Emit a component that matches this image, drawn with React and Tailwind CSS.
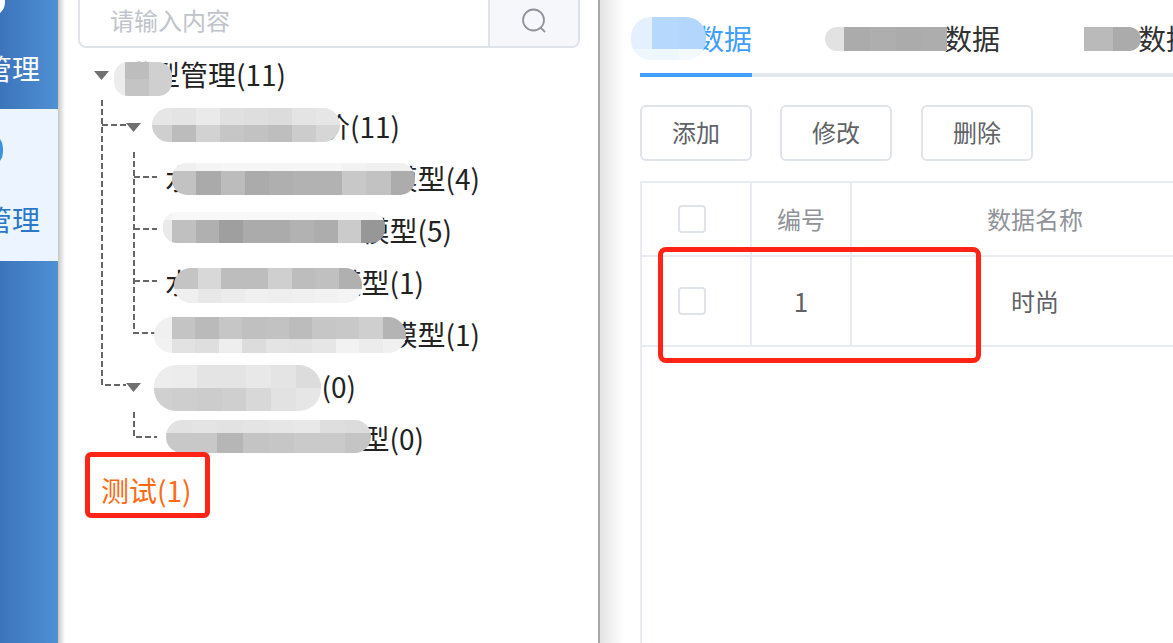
const treeRows = [
  { pad: "pl-[46px]", width: "w-[160px]", lead: "", tail: "模型管理(11)" },
  { pad: "pl-[74px]", width: "w-[248px]", lead: "", tail: "价(11)" },
  { pad: "pl-[87px]", width: "w-[315px]", lead: "水", tail: "模型(4)" },
  { pad: "pl-[87px]", width: "w-[287px]", lead: "", tail: "模型(5)" },
  { pad: "pl-[87px]", width: "w-[259px]", lead: "水", tail: "模型(1)" },
  { pad: "pl-[87px]", width: "w-[315px]", lead: "", tail: "模型(1)" },
  { pad: "pl-[77px]", width: "w-[201px]", lead: "", tail: "价(0)" },
  { pad: "pl-[87px]", width: "w-[259px]", lead: "", tail: "型(0)" },
];

const blobs = [
  {
    box: "left-[114px] top-[62px] w-[58px] h-[34px] rounded-[14px]",
    top: ["flex-none! w-[11px] bg-[#ececec]", "bg-[#bdbdbd]", "bg-[#d0d0d0]"],
    bottom: ["flex-none! w-[11px] bg-[#ececec]", "bg-[#c4c4c4]", "bg-[#cfcfcf]"],
  },
  {
    box: "left-[152px] top-[108px] w-[188px] h-[34px] rounded-[17px]",
    top: ["flex-none! w-[20px] bg-[#e6e6e6]", "bg-[#e4e4e4]", "bg-[#eaeaea]", "bg-[#e0e0e0]", "bg-[#dedede]", "bg-[#dcdcdc]", "bg-[#e4e4e4]", "bg-[#e6e6e6]"],
    bottom: ["flex-none! w-[20px] bg-[#cfcfcf]", "bg-[#bcbcbc]", "bg-[#d2d2d2]", "bg-[#c6c6c6]", "bg-[#c2c2c2]", "bg-[#bebebe]", "bg-[#cccccc]", "bg-[#d6d6d6]"],
  },
  {
    box: "left-[172px] top-[163px] w-[243px] h-[32px] rounded-[15px]",
    split: "grid-rows-[1fr_3fr]",
    top: ["bg-[#f0f0f0]", "bg-[#f4f4f4]", "bg-[#f6f6f6]", "bg-[#f6f6f6]", "bg-[#f6f6f6]", "bg-[#f6f6f6]", "bg-[#f6f6f6]", "bg-[#f2f2f2]", "bg-[#f0f0f0]", "bg-[#f0f0f0]"],
    bottom: ["bg-[#c2c2c2]", "bg-[#aaaaaa]", "bg-[#bcbcbc]", "bg-[#ababab]", "bg-[#afafaf]", "bg-[#b2b2b2]", "bg-[#b2b2b2]", "bg-[#c8c8c8]", "bg-[#c2c2c2]", "bg-[#acacac]"],
  },
  {
    box: "left-[163px] top-[212px] w-[222px] h-[31px] rounded-[14px]",
    split: "grid-rows-[1fr_3fr]",
    top: ["flex-none! w-[9px] bg-[#f4f4f4]", "bg-[#f8f8f8]", "bg-[#f8f8f8]", "bg-[#f8f8f8]", "bg-[#f8f8f8]", "bg-[#f8f8f8]", "bg-[#f8f8f8]", "bg-[#f8f8f8]", "bg-[#f8f8f8]", "bg-[#f8f8f8]"],
    bottom: ["flex-none! w-[9px] bg-[#eaeaea]", "bg-[#c0c0c0]", "bg-[#b0b0b0]", "bg-[#9f9f9f]", "bg-[#ababab]", "bg-[#ababab]", "bg-[#b2b2b2]", "bg-[#adadad]", "bg-[#cbcbcb]", "bg-[#979797]"],
  },
  {
    box: "left-[174px] top-[268px] w-[188px] h-[35px] rounded-[17px]",
    split: "grid-rows-[3fr_2fr]",
    top: ["bg-[#c4c4c4]", "bg-[#d8d8d8]", "bg-[#bdbdbd]", "bg-[#bdbdbd]", "bg-[#cfcfcf]", "bg-[#bdbdbd]", "bg-[#c0c0c0]", "bg-[#b0b0b0]"],
    bottom: ["bg-[#efefef]", "bg-[#e8e8e8]", "bg-[#ececec]", "bg-[#f0f0f0]", "bg-[#eeeeee]", "bg-[#f0f0f0]", "bg-[#f2f2f2]", "bg-[#f4f4f4]"],
  },
  {
    box: "left-[154px] top-[317px] w-[252px] h-[36px] rounded-[18px]",
    split: "grid-rows-[3fr_2fr]",
    top: ["flex-none! w-[18px] bg-[#f0f0f0]", "bg-[#c4c4c4]", "bg-[#bababa]", "bg-[#c6c6c6]", "bg-[#c0c0c0]", "bg-[#c2c2c2]", "bg-[#bcbcbc]", "bg-[#c6c6c6]", "bg-[#c8c8c8]", "bg-[#cfcfcf]", "bg-[#b4b4b4]"],
    bottom: ["flex-none! w-[18px] bg-[#f2f2f2]", "bg-[#e2e2e2]", "bg-[#dedede]", "bg-[#eeeeee]", "bg-[#dcdcdc]", "bg-[#e4e4e4]", "bg-[#e2e2e2]", "bg-[#e6e6e6]", "bg-[#f2f2f2]", "bg-[#ececec]", "bg-[#f0f0f0]"],
  },
  {
    box: "left-[154px] top-[365px] w-[167px] h-[46px] rounded-[22px]",
    top: ["flex-none! w-[18px] bg-[#ededed]", "bg-[#ececec]", "bg-[#e4e4e4]", "bg-[#e4e4e4]", "bg-[#e8e8e8]", "bg-[#e4e4e4]", "bg-[#dcdcdc]"],
    bottom: ["flex-none! w-[18px] bg-[#d0d0d0]", "bg-[#cecece]", "bg-[#cccccc]", "bg-[#cfcfcf]", "bg-[#d8d8d8]", "bg-[#e2e2e2]", "bg-[#e6e6e6]"],
  },
  {
    box: "left-[166px] top-[420px] w-[205px] h-[33px] rounded-[16px]",
    split: "grid-rows-[2fr_3fr]",
    top: ["bg-[#e2e2e2]", "bg-[#e4e4e4]", "bg-[#e2e2e2]", "bg-[#e4e4e4]", "bg-[#e6e6e6]", "bg-[#e8e8e8]", "bg-[#dedede]", "bg-[#dcdcdc]"],
    bottom: ["bg-[#c8c8c8]", "bg-[#c8c8c8]", "bg-[#b6b6b6]", "bg-[#c4c4c4]", "bg-[#c6c6c6]", "bg-[#cacaca]", "bg-[#cacaca]", "bg-[#c4c4c4]"],
  },
  {
    box: "left-[631px] top-[17px] w-[75px] h-[43px] rounded-[20px]",
    split: "grid-rows-[3fr_1fr]",
    top: ["flex-none! w-[21px] bg-[#e4f0fd]", "bg-[#b6d8fd]", "bg-[#b3d6fd]"],
    bottom: ["flex-none! w-[21px] bg-[#eef6fe]", "bg-[#eef6fe]", "bg-[#f4f9fe]"],
  },
  {
    box: "left-[825px] top-[27px] w-[122px] h-[24px] rounded-l-[12px]",
    top: ["flex-none! w-[19px] bg-[#e2e2e2]", "bg-[#ababab]", "bg-[#aeaeae]", "bg-[#ababab]", "bg-[#adadad]"],
    bottom: ["flex-none! w-[19px] bg-[#e2e2e2]", "bg-[#ababab]", "bg-[#aeaeae]", "bg-[#ababab]", "bg-[#adadad]"],
  },
  {
    box: "left-[1084px] top-[27px] w-[57px] h-[24px] rounded-r-[12px]",
    top: ["bg-[#bababa]", "bg-[#ababab]"],
    bottom: ["bg-[#bababa]", "bg-[#ababab]"],
  },
];

const Blob = ({ box, top, bottom, split = "grid-rows-2" }) => (
  <div className={`absolute overflow-hidden grid ${split} ${box}`}>
    <div className="flex">
      {top.map((color, i) => (
        <div key={i} className={`flex-1 ${color}`} />
      ))}
    </div>
    <div className="flex">
      {bottom.map((color, i) => (
        <div key={i} className={`flex-1 ${color}`} />
      ))}
    </div>
  </div>
);

const TreeLines = () => (
  <svg className="absolute inset-0" width="600" height="643" fill="none">
    <g stroke="#666" strokeWidth="2" strokeDasharray="6 3">
      <path d="M102 100V385H126" />
      <path d="M102 125H126" />
      <path d="M134 152V333H157" />
      <path d="M134 177H157" />
      <path d="M134 229H157" />
      <path d="M134 281H157" />
      <path d="M134 412V437H157" />
    </g>
    <g fill="#6f6f6f">
      <path d="M94 71H109L101.500 80Z" />
      <path d="M126 123H141L133.500 132Z" />
      <path d="M126 383H141L133.500 392Z" />
    </g>
  </svg>
);

const Sidebar = () => (
  <aside className="w-[58px] shrink-0 overflow-hidden bg-gradient-to-r from-[#3c74bb] to-[#5090d5]">
    <div className="-mt-[43px] h-[152px] flex flex-col">
      <div className="mt-[26px] h-[34px] w-[30px] -ml-[25px] rounded-full bg-white" />
      <div className="mt-[31px] text-[28px] leading-[40px] -ml-[16px] whitespace-nowrap text-white">管理</div>
    </div>
    <div className="h-[152px] bg-[#ecf5ff] flex flex-col">
      <div className="mt-[24px] h-[34px] w-[30px] -ml-[27px] rounded-full bg-[#3f8fe0]" />
      <div className="mt-[32px] text-[28px] leading-[40px] -ml-[16px] whitespace-nowrap text-[#2a79c9]">管理</div>
    </div>
  </aside>
);

const TreePanel = () => (
  <section className="w-[542px] shrink-0 border-r-2 border-[#a8a8a8] bg-[linear-gradient(to_right,#c6c6c6,#ffffff_7px)] pl-[20px]">
    <div className="w-[502px] h-[48px] flex border-2 border-t-0 border-[#dfe3ea] rounded-b-lg overflow-hidden">
      <div className="flex-1 pl-[30px] pb-[6px] flex items-center text-[24px] text-[#c0c4cc]">请输入内容</div>
      <div className="w-[90px] border-l-2 border-[#dfe3ea] bg-[#f5f7fa] flex items-center justify-center pb-[5px]">
        <svg width="26" height="26" viewBox="0 0 26 26" fill="none" stroke="#909399" strokeWidth="1.8">
          <circle cx="12.500" cy="12" r="10.500" />
          <path d="M20 20l3.500 3.500" strokeLinecap="round" />
        </svg>
      </div>
    </div>
    <div className="text-[28px] text-[#222222]">
      {treeRows.map((row, i) => (
        <div key={i} className={`h-[52px] flex items-center ${row.pad}`}>
          <div className={`flex justify-between whitespace-nowrap ${row.width}`}>
            <span>{row.lead}</span>
            <span>{row.tail}</span>
          </div>
        </div>
      ))}
      <div className="h-[52px] flex items-center pl-[23px] text-[#ff6a13]">测试(1)</div>
    </div>
  </section>
);

const ToolButton = ({ label }) => (
  <button className="w-[112px] h-[56px] pb-[2px] border-2 border-[#dfe3ea] rounded-md bg-white text-[24px] text-[#606266]">
    {label}
  </button>
);

const Checkbox = () => <div className="w-[28px] h-[28px] border-2 border-[#dfe3ea] rounded-[4px] bg-white" />;

const MainPanel = () => (
  <main className="flex-1 min-w-0 overflow-hidden flex flex-col pl-[40px] bg-[linear-gradient(to_right,#e4e4e4,#ffffff_24px)]">
    <div className="h-[77px] shrink-0 flex border-b-4 border-[#e4e7ed] text-[28px] text-[#303133]">
      <div className="w-[112px] h-[77px] shrink-0 border-b-4 border-[#409eff] pt-[17px] text-right text-[#409eff]">数据</div>
      <div className="w-[248px] shrink-0 pt-[17px] text-right">数据</div>
      <div className="w-[194px] shrink-0 pt-[17px] text-right">数据</div>
    </div>
    <div className="mt-[28px] flex gap-[28px]">
      <ToolButton label="添加" />
      <ToolButton label="修改" />
      <div className="ml-[1px]">
        <ToolButton label="删除" />
      </div>
    </div>
    <div className="mt-[20px] flex-1 w-[600px] border-l-2 border-t-2 border-[#e8ebf2] text-[24px]">
      <div className="h-[74px] grid grid-cols-[110px_100px_368px] border-b-2 border-[#e8ebf2] text-[#909399]">
        <div className="border-r-2 border-[#e8ebf2] flex items-center justify-center pr-[8px]">
          <Checkbox />
        </div>
        <div className="border-r-2 border-[#e8ebf2] flex items-center justify-center">编号</div>
        <div className="flex items-center justify-center pr-[2px]">数据名称</div>
      </div>
      <div className="h-[90px] grid grid-cols-[110px_100px_368px] border-b-2 border-[#e8ebf2] text-[#606266]">
        <div className="border-r-2 border-[#e8ebf2] flex items-center justify-center pr-[8px]">
          <Checkbox />
        </div>
        <div className="border-r-2 border-[#e8ebf2] flex items-center justify-center pb-[2px] text-[26px]">1</div>
        <div className="flex items-center justify-center pr-[2px]">时尚</div>
      </div>
    </div>
  </main>
);

const App = () => {
  return (
    <div className="relative w-[1173px] h-[643px] overflow-hidden flex bg-white font-['Noto_Sans_CJK_SC',sans-serif]">
      <Sidebar />
      <TreePanel />
      <MainPanel />
      <TreeLines />
      {blobs.map((blob, i) => (
        <Blob key={i} {...blob} />
      ))}
      <div className="absolute left-[85px] top-[452px] w-[125px] h-[66px] border-[5px] border-[#ff2415] rounded-md" />
      <div className="absolute left-[658px] top-[247px] w-[323px] h-[116px] border-[5px] border-[#ff2415] rounded-lg" />
    </div>
  );
};

export default App;
